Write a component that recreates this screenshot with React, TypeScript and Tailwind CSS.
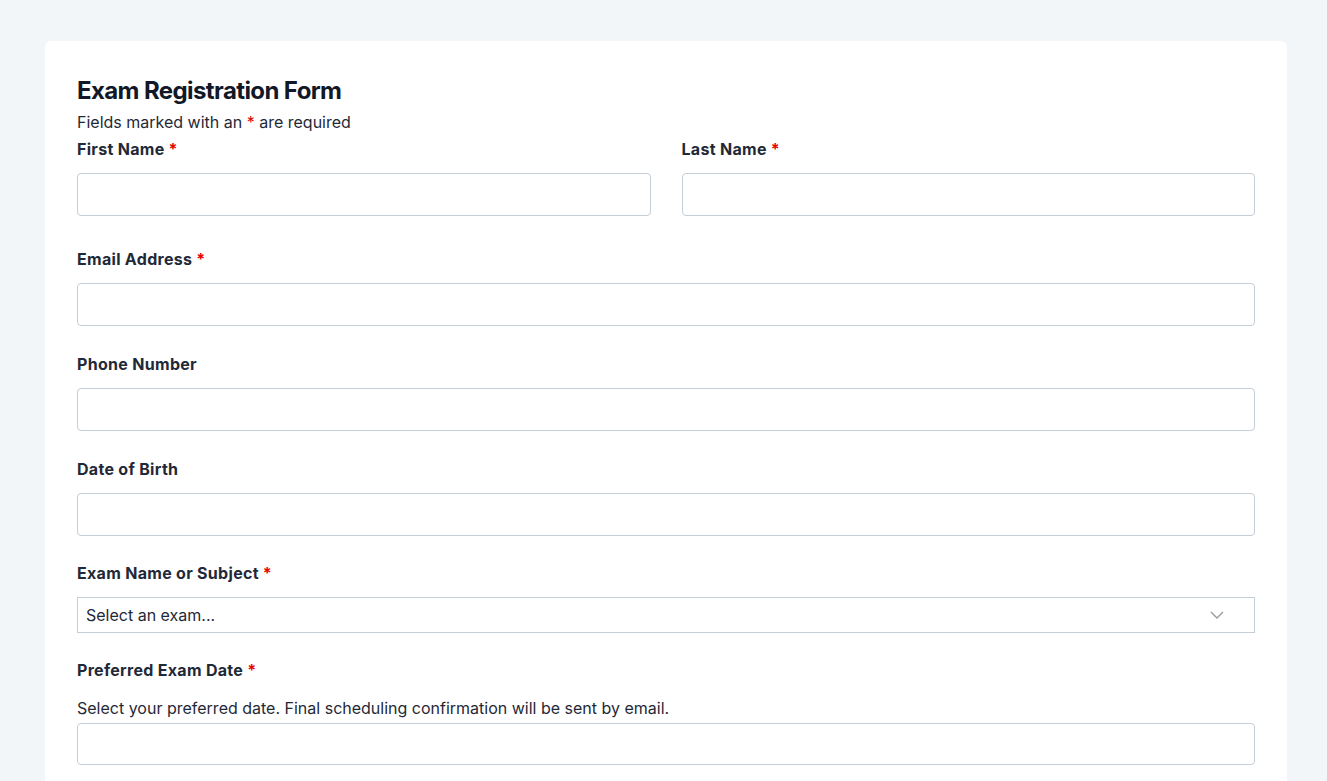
import React from "react";

const Req = () => <span className="text-[#e50000] ml-1">*</span>;

function Label({ children, req }: { children: React.ReactNode; req?: boolean }) {
  return (
    <div className="text-base leading-6 font-bold tracking-[0.3px] text-[#1f2937]">
      {children}
      {req && <Req />}
    </div>
  );
}

function Input({ h = "h-[43px]" }: { h?: string }) {
  return <div className={`${h} w-full rounded-[4px] border border-[#c3ced9] bg-white`} />;
}

export default function App() {
  return (
    <div
      className="min-h-[781px] bg-[#f3f6f9] pl-[45px] pr-[40px] pt-[41px]"
      style={{ fontFamily: "Inter, 'Noto Sans', sans-serif" }}
    >
      <div className="rounded-md bg-white px-8 pt-[34px] pb-8">
        <h1 className="text-2xl leading-8 font-bold tracking-tight text-[#111827]">Exam Registration Form</h1>
        <p className="mt-[3px] text-base leading-6 text-[#1f2937]">
          Fields marked with an <span className="text-[#e50000]">*</span> are required
        </p>

        <div className="mt-[3px] grid grid-cols-2 gap-x-[31px]">
          <div>
            <Label req>First Name</Label>
            <div className="mt-3">
              <Input />
            </div>
          </div>
          <div>
            <Label req>Last Name</Label>
            <div className="mt-3">
              <Input />
            </div>
          </div>
        </div>

        <div className="mt-[31px]">
          <Label req>Email Address</Label>
          <div className="mt-3">
            <Input />
          </div>
        </div>

        <div className="mt-[26px]">
          <Label>Phone Number</Label>
          <div className="mt-3">
            <Input />
          </div>
        </div>

        <div className="mt-[26px]">
          <Label>Date of Birth</Label>
          <div className="mt-3">
            <Input />
          </div>
        </div>

        <div className="mt-[25px]">
          <Label req>Exam Name or Subject</Label>
          <div className="mt-3 flex h-[36px] items-center justify-between border border-[#c3ced9] bg-white pl-2 pr-[30px]">
            <span className="text-base text-[#1f2937]">Select an exam...</span>
            <svg width="14" height="8" viewBox="0 0 14 8" fill="none">
              <path d="M1 1l6 6 6-6" stroke="#9a9a9a" strokeWidth="1.4" />
            </svg>
          </div>
        </div>

        <div className="mt-[25px]">
          <Label req>Preferred Exam Date</Label>
          <p className="mt-[14px] text-base leading-6 text-[#1f2937]">
            Select your preferred date. Final scheduling confirmation will be sent by email.
          </p>
          <div className="mt-[3px]">
            <Input h="h-[42px]" />
          </div>
        </div>
      </div>
    </div>
  );
}
